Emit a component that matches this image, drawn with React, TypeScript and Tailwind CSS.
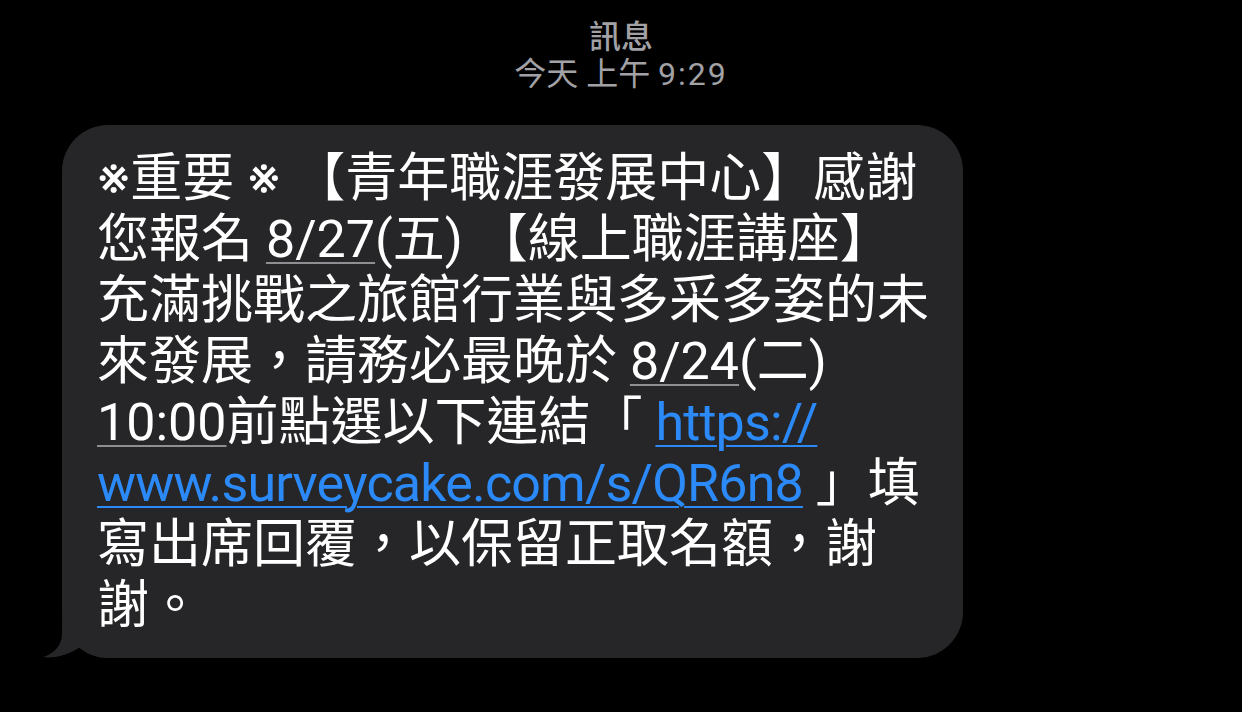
export default function App() {
  const date = "underline decoration-[#8e8e93] decoration-2 underline-offset-[5px]";
  const link =
    "text-[#2b8af7] underline decoration-[#2b8af7] decoration-2 underline-offset-[5px] tracking-[-0.016em]";
  const mark = "font-[Inter,'Noto_Sans_CJK_TC',sans-serif]";
  return (
    <main className="min-h-screen w-full bg-black pt-[19px] font-[Roboto,'Noto_Sans_CJK_TC',sans-serif]">
      <header className="text-center text-[32px] leading-[37px] text-[#a1a1a6]">
        <div className="font-medium">訊息</div>
        <div>
          今天 上午 <span className="tracking-[2px]">9:29</span>
        </div>
      </header>

      <div className="relative ml-[62px] mt-[32px] w-[901px]">
        <svg
          className="absolute bottom-0 left-[-19px]"
          width="80"
          height="57"
          viewBox="0 0 80 57"
          overflow="visible"
        >
          <path
            d="M19 5 L19 33 C19 45 10 53 0 56 C12 58 27 53 37 46 C47 53 57 57 72 57 L72 5 Z"
            fill="#262628"
          />
        </svg>
        <div className="relative rounded-[46px] bg-[#262628] pb-[22px] pl-[35px] pr-[20px] pt-[22px] text-[52px] leading-[61px] text-white whitespace-nowrap">
          <div>
            <span className={mark}>※</span>重要 <span className={mark}>※</span> 【青年職涯發展中心】感謝
          </div>
          <div>
            您報名 <span className={date}>8/27</span>(五) 【線上職涯講座】
          </div>
          <div>充滿挑戰之旅館行業與多采多姿的未</div>
          <div>
            來發展，請務必最晚於 <span className={date}>8/24</span>(二)
          </div>
          <div>
            <span className={date}>10:00</span>前點選以下連結「 <span className={link}>https://</span>
          </div>
          <div>
            <span className={link}>www.surveycake.com/s/QR6n8</span> 」填
          </div>
          <div>寫出席回覆，以保留正取名額，謝</div>
          <div>謝。</div>
        </div>
      </div>
    </main>
  );
}
